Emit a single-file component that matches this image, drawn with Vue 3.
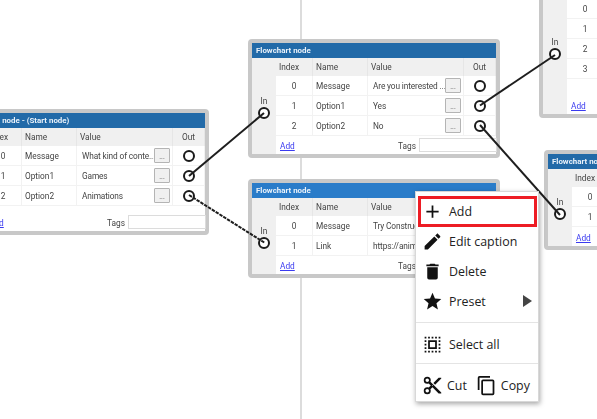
<script setup>
const nodes = [
  { id: 'start', cls: 'n-start', title: 'Flowchart node - (Start node)', cols: ['Index', 'Name', 'Value', 'Out'], hasIn: false,
    rows: [['0','Message','What kind of conte...'],['1','Option1','Games'],['2','Option2','Animations']], tags: true },
  { id: 'ask', cls: 'n-ask', title: 'Flowchart node', cols: ['Index', 'Name', 'Value', 'Out'], hasIn: true,
    rows: [['0','Message','Are you interested ...'],['1','Option1','Yes'],['2','Option2','No']], tags: true },
  { id: 'sel', cls: 'n-sel', title: 'Flowchart node', cols: ['Index', 'Name', 'Value', 'Out'], hasIn: true,
    rows: [['0','Message','Try Construct 3'],['1','Link','https://animations']], tags: true },
  { id: 'top', cls: 'n-top', title: 'Flowchart node', cols: ['Index', 'Name', 'Value', 'Out'], hasIn: true,
    rows: [['0','',''],['1','',''],['2','',''],['3','','']], tags: false },
  { id: 'right', cls: 'n-right', title: 'Flowchart node', cols: ['Index', 'Name', 'Value', 'Out'], hasIn: true,
    rows: [['0','',''],['1','','']], tags: false }
]
const icons = {
  plus: 'M19,13H13V19H11V13H5V11H11V5H13V11H19V13Z',
  pencil: 'M20.71,7.04C21.1,6.65 21.1,6 20.71,5.63L18.37,3.29C18,2.9 17.35,2.9 16.96,3.29L15.12,5.12L18.87,8.87M3,17.25V21H6.75L17.81,9.93L14.06,6.18L3,17.25Z',
  del: 'M19,4H15.5L14.5,3H9.5L8.5,4H5V6H19M6,19A2,2 0 0,0 8,21H16A2,2 0 0,0 18,19V7H6V19Z',
  star: 'M12,17.27L18.18,21L16.54,13.97L22,9.24L14.81,8.62L12,2L9.19,8.62L2,9.24L7.45,13.97L5.82,21L12,17.27Z',
  select: 'M7,7H17V17H7V7M9,9V15H15V9H9M3,3H5V5H3M7,3H9V5H7M11,3H13V5H11M15,3H17V5H15M19,3H21V5H19M19,7H21V9H19M19,11H21V13H19M19,15H21V17H19M19,19H21V21H19M15,19H17V21H15M11,19H13V21H11M7,19H9V21H7M3,19H5V21H3M3,15H5V17H3M3,11H5V13H3M3,7H5V9H3Z',
  cut: 'M19,3L13,9L15,11L22,4V3M12,12.5A0.5,0.5 0 0,1 11.5,12A0.5,0.5 0 0,1 12,11.5A0.5,0.5 0 0,1 12.5,12A0.5,0.5 0 0,1 12,12.5M6,20A2,2 0 0,1 4,18C4,16.89 4.9,16 6,16A2,2 0 0,1 8,18C8,19.11 7.1,20 6,20M6,8A2,2 0 0,1 4,6C4,4.89 4.9,4 6,4A2,2 0 0,1 8,6C8,7.11 7.1,8 6,8M9.64,7.64C9.87,7.14 10,6.59 10,6A4,4 0 0,0 6,2A4,4 0 0,0 2,6A4,4 0 0,0 6,10C6.59,10 7.14,9.87 7.64,9.64L10,12L7.64,14.36C7.14,14.13 6.59,14 6,14A4,4 0 0,0 2,18A4,4 0 0,0 6,22A4,4 0 0,0 10,18C10,17.41 9.87,16.86 9.64,16.36L12,14L19,21H22V20L9.64,7.64Z',
  copy: 'M19,21H8V7H19M19,5H8A2,2 0 0,0 6,7V21A2,2 0 0,0 8,23H19A2,2 0 0,0 21,21V7A2,2 0 0,0 19,5M16,1H4A2,2 0 0,0 2,3V17H4V3H16V1Z'
}
const menu = [
  { label: 'Add', icon: icons.plus, active: true },
  { label: 'Edit caption', icon: icons.pencil },
  { label: 'Delete', icon: icons.del },
  { label: 'Preset', icon: icons.star, arrow: true }
]
</script>

<template>
  <div class="canvas">
    <div class="guide"></div>

    <section v-for="n in nodes" :key="n.id" class="node" :class="n.cls">
      <header class="title">{{ n.title }}</header>
      <div class="body">
        <div class="in-col">
          <template v-if="n.hasIn">
            <span class="in-label">In</span>
            <span class="port"></span>
          </template>
        </div>
        <div class="main">
          <div class="row head">
            <span class="c-i">{{ n.cols[0] }}</span>
            <span class="c-n">{{ n.cols[1] }}</span>
            <span class="c-v">{{ n.cols[2] }}</span>
            <span class="c-o">{{ n.cols[3] }}</span>
          </div>
          <div v-for="r in n.rows" :key="r[0]" class="row">
            <span class="c-i">{{ r[0] }}</span>
            <span class="c-n">{{ r[1] }}</span>
            <span class="c-v"><span class="val">{{ r[2] }}</span><button class="dots">...</button></span>
            <span class="c-o"><span class="port"></span></span>
          </div>
          <div class="foot">
            <a class="add">Add</a>
            <label v-if="n.tags" class="tags">Tags<span class="tag-box"></span></label>
          </div>
        </div>
      </div>
    </section>

    <svg class="edges" width="597" height="419" viewBox="0 0 597 419">
      <line x1="189" y1="176" x2="264" y2="113" />
      <line x1="189" y1="195" x2="265" y2="243" stroke-dasharray="3.5 1" />
      <line x1="480" y1="105.5" x2="555" y2="55" />
      <line x1="480" y1="125" x2="560" y2="215" />
    </svg>

    <nav class="menu">
      <div class="group">
        <div v-for="m in menu" :key="m.label" class="item" :class="{ active: m.active }">
          <svg class="ico" viewBox="0 0 24 24"><path :d="m.icon" /></svg>
          <span>{{ m.label }}</span>
          <i v-if="m.arrow" class="arrow"></i>
        </div>
      </div>
      <div class="group sel">
        <div class="item">
          <svg class="ico" viewBox="0 0 24 24"><path fill-rule="evenodd" :d="icons.select" /></svg>
          <span>Select all</span>
        </div>
      </div>
      <div class="clip">
        <span class="clip-item">
          <svg class="ico" viewBox="0 0 24 24"><path :d="icons.cut" /></svg>Cut
        </span>
        <span class="clip-item">
          <svg class="ico" viewBox="0 0 24 24"><path :d="icons.copy" /></svg>Copy
        </span>
      </div>
    </nav>
  </div>
</template>

<style>
html, body { margin: 0; background: #fff; }
</style>

<style scoped>
.canvas {
  position: relative;
  width: 597px;
  height: 419px;
  overflow: hidden;
  background: #fff;
  font-family: "Open Sans", "Noto Sans", sans-serif;
}
.guide {
  position: absolute;
  left: 300px;
  top: 0;
  bottom: 0;
  width: 2px;
  background: #dcdcdc;
}
.node {
  position: absolute;
  box-sizing: border-box;
  border: 4px solid #c8c8c8;
  border-radius: 4px;
  background: #f0f0f0;
  width: 252px;
  display: flex;
  flex-direction: column;
  color: #444;
  font-family: Roboto, "Open Sans", sans-serif;
  font-size: 8.3px;
  filter: blur(0.25px);
}
.n-start { left: -43px; top: 109px; height: 126px; }
.n-ask { left: 248px; top: 39px; height: 119px; }
.n-sel { left: 248px; top: 179px; height: 99px; }
.n-sel .title { background: #2a7cc9; }
.n-top { left: 539px; top: -38px; height: 156px; }
.n-right { left: 544px; top: 150px; height: 100px; }
.title {
  height: 15px;
  line-height: 15px;
  flex: none;
  padding-left: 4px;
  background: #226aa8;
  color: #eaf2fa;
  font-weight: 700;
  font-size: 7.9px;
  white-space: nowrap;
}
.body { flex: 1; display: flex; min-height: 0; }
.in-col {
  width: 24px;
  flex: none;
  display: flex;
  flex-direction: column;
  align-items: center;
  justify-content: center;
  gap: 0;
  padding-top: 2px;
  box-sizing: border-box;
}
.in-label { line-height: 11px; }
.main { flex: 1; display: flex; flex-direction: column; background: #fff; min-width: 0; }
.row {
  height: 20px;
  flex: none;
  display: grid;
  grid-template-columns: 37px 55px 96px 32px;
  align-items: stretch;
  border-bottom: 1px solid #f2f2f2;
  box-sizing: border-box;
}
.row > span { display: flex; align-items: center; border-right: 1px solid #f2f2f2; min-width: 0; }
.row.head {
  height: 18px;
  background: #f0f0f0;
  border-bottom: 0;
}
.row.head > span { border-right-color: #e6e6e6; }
.c-i, .c-o { justify-content: center; }
.head .c-i { justify-content: flex-start; padding-left: 3px; }
.c-n { padding-left: 3px; }
.c-v { padding: 0 2px 0 5px; justify-content: space-between; }
.head .c-v { padding-left: 3px; }
.val { white-space: nowrap; overflow: hidden; flex: 1; min-width: 0; letter-spacing: -0.12px; }
.dots {
  width: 16px;
  height: 15px;
  flex: none;
  margin: 0;
  padding: 3px 0 0;
  border: 1px solid #b4b4b4;
  border-radius: 1px;
  background: #f0f0f0;
  color: #555;
  font: inherit;
  font-size: 7px;
  line-height: 8px;
}
.port {
  display: block;
  box-sizing: border-box;
  width: 12px;
  height: 12px;
  flex: none;
  border: 2px solid #1a1a1a;
  border-radius: 50%;
  background: #fff;
}
.foot {
  flex: 1;
  display: flex;
  align-items: flex-end;
  justify-content: space-between;
  padding: 0 2px 2px 4px;
  min-height: 0;
}
.add { color: #3b3bf0; text-decoration: underline; line-height: 12px; }
.tags { display: flex; align-items: flex-end; gap: 3px; width: 96px; line-height: 11px; }
.tag-box {
  width: 78px;
  height: 14px;
  flex: none;
  box-sizing: border-box;
  border: 1px solid #dcdcdc;
  background: #fff;
}
.edges { position: absolute; left: 0; top: 0; pointer-events: none; }
.edges line { stroke: #1e1e1e; stroke-width: 2; }
.menu {
  position: absolute;
  left: 415px;
  top: 191px;
  width: 124px;
  height: 211px;
  box-sizing: border-box;
  padding-top: 4px;
  background: #fff;
  border: 1px solid #d8d8d8;
  box-shadow: 1px 2px 5px rgba(0,0,0,.35);
  color: #222;
  font-size: 12.4px;
  display: flex;
  flex-direction: column;
}
.group { padding-bottom: 6px; border-bottom: 1px solid #e4e4e4; }
.sel { padding: 6px 0 4px; }
.item {
  height: 30px;
  box-sizing: border-box;
  position: relative;
  display: flex;
  align-items: center;
  padding-left: 6px;
  gap: 6px;
}
.item.active {
  height: 31px;
  margin: 0 1px -1px 2px;
  padding-left: 4px;
  outline: 3px solid #ed1c24;
  outline-offset: -3px;
}
.ico { width: 21px; height: 21px; flex: none; fill: #111; }
.arrow {
  position: absolute;
  right: 6px;
  top: 9px;
  width: 0;
  height: 0;
  border-left: 9px solid #444;
  border-top: 6px solid transparent;
  border-bottom: 6px solid transparent;
}
.clip { flex: 1; display: flex; align-items: center; padding: 5px 0 0 6px; gap: 9px; }
.clip-item { display: flex; align-items: center; gap: 4px; }
</style>
